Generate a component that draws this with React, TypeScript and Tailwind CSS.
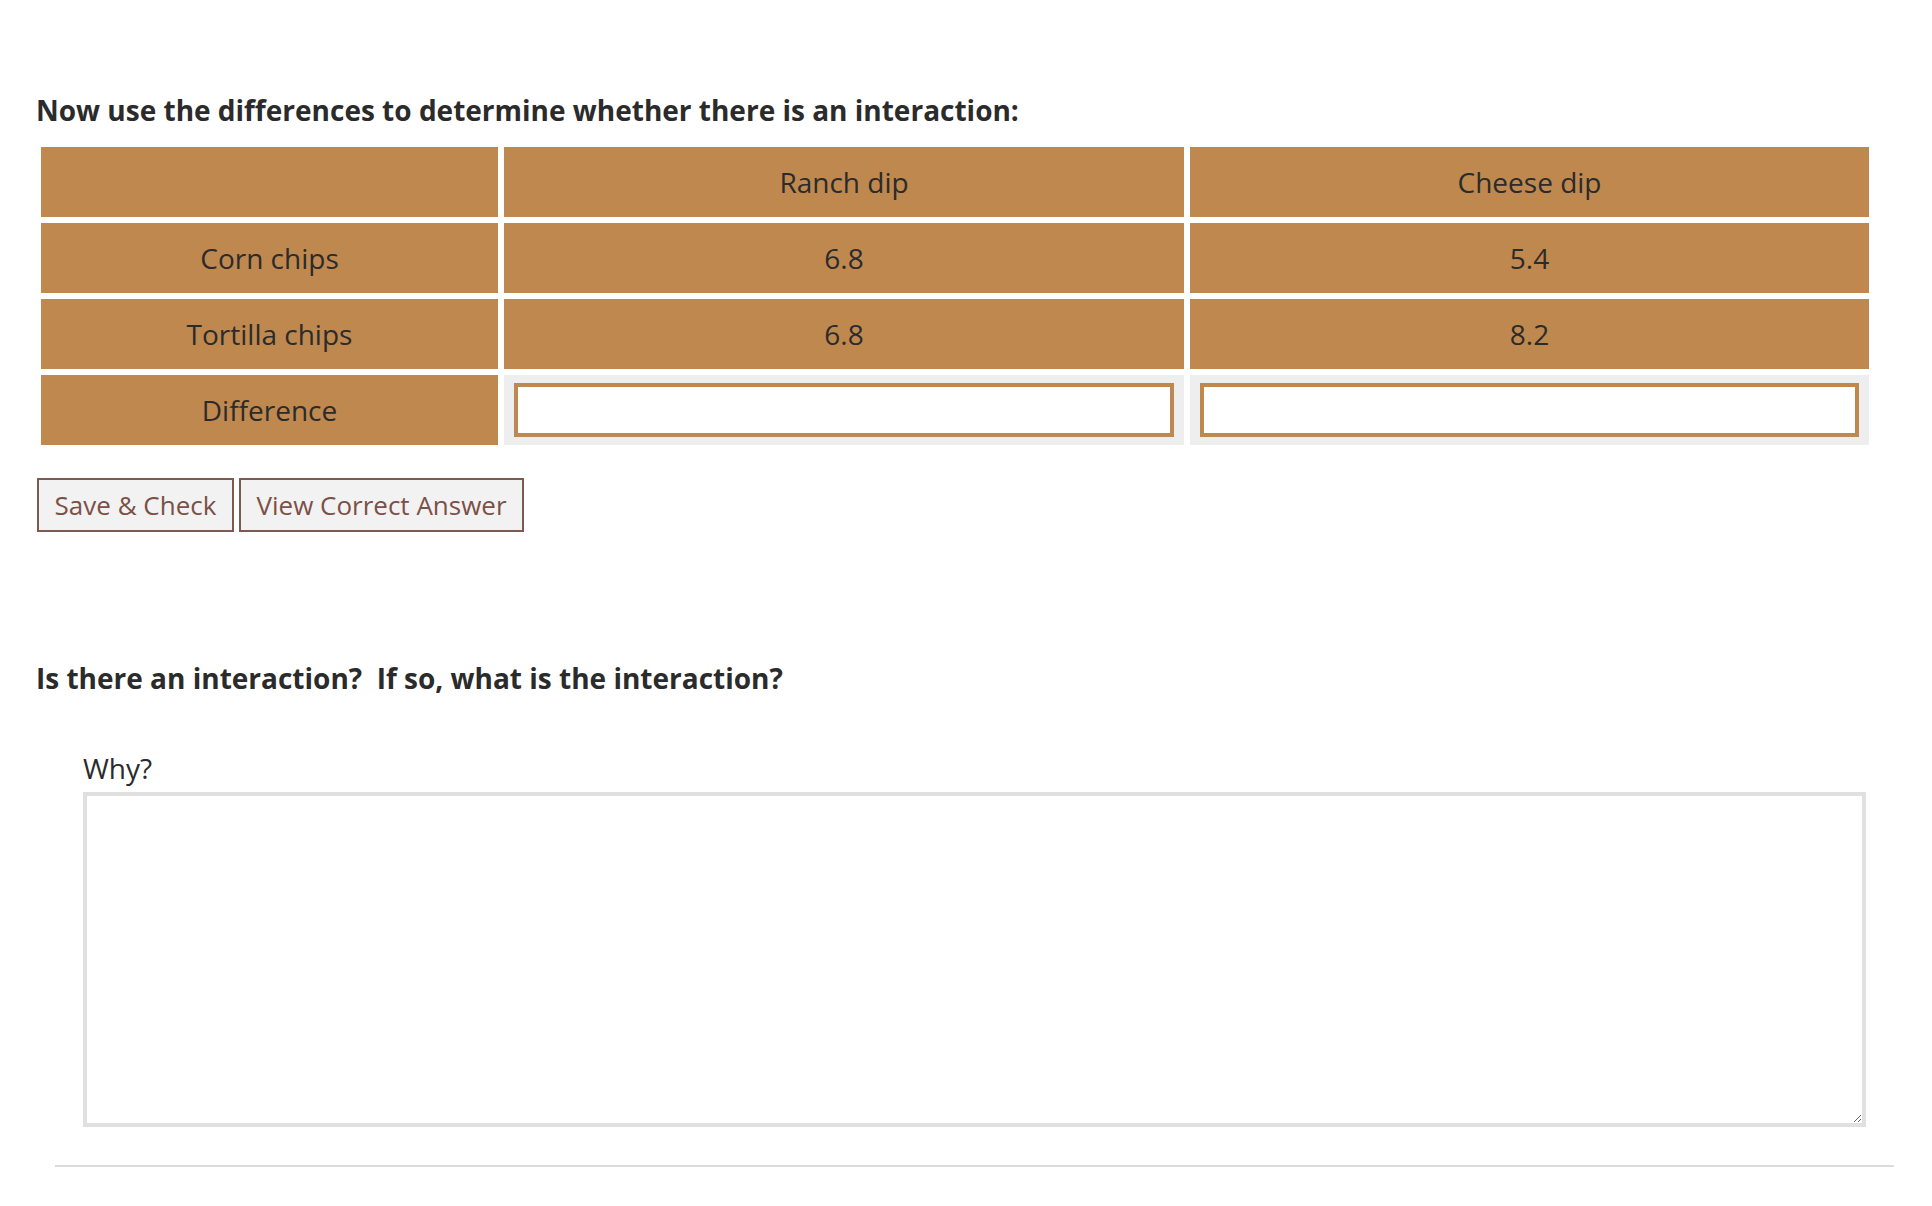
import { useState } from 'react'

const rows = [
  { label: 'Corn chips', ranch: '6.8', cheese: '5.4' },
  { label: 'Tortilla chips', ranch: '6.8', cheese: '8.2' },
]

export default function App() {
  const [ranchDiff, setRanchDiff] = useState('')
  const [cheeseDiff, setCheeseDiff] = useState('')
  const [why, setWhy] = useState('')

  const cell = 'h-[70px] bg-[#bf884f] text-center align-middle p-0'

  return (
    <div className="min-h-screen bg-white pl-[36px] pt-[91px] text-[#2b2b2b] font-['Open_Sans',sans-serif] text-[28px] leading-[39px]">
      {/* Differences table */}
      <h2 className="font-bold">Now use the differences to determine whether there is an interaction:</h2>

      <table className="mt-[11px] ml-[-1px] w-[1840px] table-fixed border-separate border-spacing-[6px]">
        <colgroup>
          <col className="w-[457px]" />
          <col className="w-[680px]" />
          <col className="w-[679px]" />
        </colgroup>
        <thead>
          <tr>
            <th className={`${cell} font-normal`}></th>
            <th className={`${cell} font-normal`}>Ranch dip</th>
            <th className={`${cell} font-normal`}>Cheese dip</th>
          </tr>
        </thead>
        <tbody>
          {rows.map(r => (
            <tr key={r.label}>
              <td className={cell}>{r.label}</td>
              <td className={cell}>{r.ranch}</td>
              <td className={cell}>{r.cheese}</td>
            </tr>
          ))}
          <tr>
            <td className={cell}>Difference</td>
            <td className="h-[70px] bg-[#eeeeee] px-[10px] py-[8px]">
              <input
                value={ranchDiff}
                onChange={e => setRanchDiff(e.target.value)}
                className="block w-full h-[54px] bg-white border-4 border-[#bf884f] outline-none px-2"
              />
            </td>
            <td className="h-[70px] bg-[#eeeeee] px-[10px] py-[8px]">
              <input
                value={cheeseDiff}
                onChange={e => setCheeseDiff(e.target.value)}
                className="block w-full h-[54px] bg-white border-4 border-[#bf884f] outline-none px-2"
              />
            </td>
          </tr>
        </tbody>
      </table>

      {/* Actions */}
      <div className="mt-[27px] ml-[1px] flex gap-[5px]">
        <button className="h-[54px] w-[197px] border-2 border-[#7d5a4f] bg-[#f2f2f2] text-[#7b5046] text-[26px]">
          Save &amp; Check
        </button>
        <button className="h-[54px] w-[285px] border-2 border-[#7d5a4f] bg-[#f2f2f2] text-[#7b5046] text-[26px]">
          View Correct Answer
        </button>
      </div>

      {/* Open response */}
      <h2 className="mt-[127px] font-bold">Is there an interaction?&nbsp; If so, what is the interaction?</h2>

      <div className="mt-[51px] ml-[47px]">
        <label className="block">Why?</label>
        <textarea
          value={why}
          onChange={e => setWhy(e.target.value)}
          className="mt-[4px] block w-[1783px] h-[335px] border-4 border-[#e0e0e0] bg-white outline-none p-2"
        />
      </div>

      <div className="mt-[38px] ml-[19px] w-[1839px] h-[2px] bg-[#dcdcdc]" />
    </div>
  )
}
